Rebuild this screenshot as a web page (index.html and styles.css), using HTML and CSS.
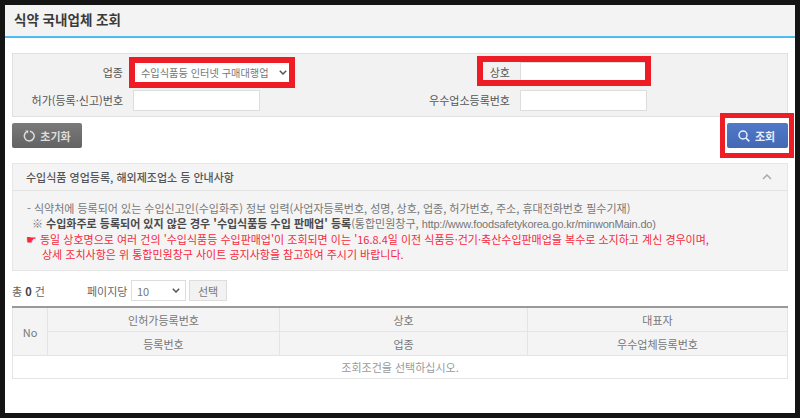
FILE: index.html
```html
<!DOCTYPE html>
<html lang="ko">
<head>
<meta charset="utf-8">
<title>식약 국내업체 조회</title>
<link rel="stylesheet" href="styles.css">
</head>
<body>
<div class="page">
  <h1 class="title">식약 국내업체 조회</h1>

  <div class="content">
    <form class="search">
      <div class="field">
        <label class="label">업종</label>
        <select class="ctl"><option>수입식품등 인터넷 구매대행업</option></select>
      </div>
      <div class="field">
        <label class="label">상호</label>
        <input class="ctl" type="text">
      </div>
      <div class="field">
        <label class="label">허가(등록·신고)번호</label>
        <input class="ctl" type="text">
      </div>
      <div class="field">
        <label class="label">우수업소등록번호</label>
        <input class="ctl" type="text">
      </div>
    </form>

    <div class="actions">
      <button class="btn btn_reset" type="button">
        <svg width="12" height="13" viewBox="0 0 12 13"><path d="M3.6 2.9A4.9 4.9 0 1 0 7 2.2" fill="none" stroke="#ddd" stroke-width="1.5"/><path d="M2.2 1.4l3.2 0.2-0.5 3z" fill="#ddd"/></svg>
        초기화
      </button>
      <button class="btn btn_search" type="button">
        <svg width="12" height="12" viewBox="0 0 12 12"><circle cx="5" cy="5" r="4" fill="none" stroke="#e8eefa" stroke-width="1.5"/><path d="M8 8L11.3 11.3" stroke="#e8eefa" stroke-width="1.7"/></svg>
        조회
      </button>
    </div>

    <div class="notice">
      <div class="notice_head">
        <span>수입식품 영업등록, 해외제조업소 등 안내사항</span>
        <svg width="10" height="6" viewBox="0 0 10 6"><path d="M1 5l4-4 4 4" fill="none" stroke="#aaa" stroke-width="1.5"/></svg>
      </div>
      <div class="notice_body">
        <p class="line1">- 식약처에 등록되어 있는 수입신고인(수입화주) 정보 입력(사업자등록번호, 성명, 상호, 업종, 허가번호, 주소, 휴대전화번호 필수기재)</p>
        <p class="line2">※ <b>수입화주로 등록되어 있지 않은 경우 '수입식품등 수입 판매업' 등록</b>(통합민원창구, <span class="url">http://www.foodsafetykorea.go.kr/minwonMain.do)</span></p>
        <p class="line3 warn"><span class="hand">☛</span>동일 상호명으로 여러 건의 '수입식품등 수입판매업'이 조회되면 이는 '16.8.4일 이전 식품등·건기·축산수입판매업을 복수로 소지하고 계신 경우이며,</p>
        <p class="line4 warn">상세 조치사항은 위 통합민원창구 사이트 공지사항을 참고하여 주시기 바랍니다.</p>
      </div>
    </div>

    <div class="list_top">
      <span class="total">총 <b>0</b> 건</span>
      <span class="per">페이지당</span>
      <select class="per_select"><option>10</option></select>
      <button class="btn_pick" type="button">선택</button>
    </div>

    <table class="grid">
      <colgroup>
        <col class="c_no"><col class="c_a"><col class="c_b"><col>
      </colgroup>
      <thead>
        <tr><th rowspan="2">No</th><th>인허가등록번호</th><th>상호</th><th>대표자</th></tr>
        <tr><th>등록번호</th><th>업종</th><th>우수업체등록번호</th></tr>
      </thead>
      <tbody>
        <tr><td colspan="4">조회조건을 선택하십시오.</td></tr>
      </tbody>
    </table>
  </div>

  <!-- red marks drawn over the screenshot -->
  <div class="mark mark1"></div>
  <div class="mark mark2"></div>
  <div class="mark mark3"></div>
</div>
</body>
</html>
```

FILE: styles.css
```css
html, body {
  margin: 0;
  padding: 0;
  height: 418px;
  overflow: hidden;
  background: #141414;
}

body {
  padding: 5px 5px 5px 5px;
  box-sizing: border-box;
  font-family: "Noto Sans CJK KR", "Liberation Sans", sans-serif;
  font-size: 11px;
  color: #666;
}

.page {
  position: relative;
  height: 408px;
  background: #fff;
}

.title {
  margin: 0;
  height: 31px;
  line-height: 29px;
  padding-left: 9px;
  font-size: 13.5px;
  font-weight: 700;
  color: #3a3a3a;
  background: #f3f3f3;
  border-bottom: 2px solid #4dbdf0;
}

.content {
  padding: 15px 7px 0 7px;
}

.search {
  display: grid;
  grid-template-columns: 1fr 1fr;
  grid-template-rows: 35px 29px;
  box-sizing: border-box;
  height: 64px;
  background: #f2f2f2;
  border: 1px solid #e0e0e0;
}

.field {
  display: flex;
  align-items: flex-end;
  padding-bottom: 6px;
}

.field:nth-child(n+3) {
  padding-bottom: 7px;
}

.label {
  width: 110px;
  text-align: right;
  line-height: 21px;
  font-size: 11px;
  color: #555;
}

.ctl {
  box-sizing: border-box;
  width: 127px;
  height: 21px;
  margin-left: 10px;
  background: #fff;
  border: 1px solid #ddd;
  padding: 0;
  font-family: inherit;
  font-size: 10.2px;
  color: #777;
}

select.ctl {
  width: 160px;
  height: 22px;
  padding-left: 7px;
}

select.ctl, .per_select {
  appearance: none;
  background-image: url("data:image/svg+xml,%3Csvg xmlns='http://www.w3.org/2000/svg' width='8' height='5'%3E%3Cpath d='M.8.8l3.2 3.2 3.2-3.2' fill='none' stroke='%23555' stroke-width='1.5'/%3E%3C/svg%3E");
  background-repeat: no-repeat;
  background-position: right 5px center;
}

.actions {
  display: flex;
  justify-content: space-between;
  margin-top: 6px;
}

.btn {
  display: flex;
  align-items: center;
  justify-content: center;
  gap: 5px;
  height: 25px;
  padding: 0;
  border: 0;
  border-radius: 2px;
  font-family: inherit;
  font-size: 11px;
  font-weight: 700;
}

.btn_reset {
  width: 70px;
  color: #ddd;
  background: linear-gradient(#7a7a7a, #636363);
}

.btn_search {
  width: 61px;
  padding-right: 2px;
  color: #e8eefa;
  background: linear-gradient(#5079c8, #4468b4);
}

.notice {
  margin-top: 15px;
  height: 108px;
  box-sizing: border-box;
  background: #f4f4f4;
  border: 1px solid #e6e6e6;
}

.notice_head {
  display: flex;
  justify-content: space-between;
  align-items: center;
  height: 26px;
  padding: 0 15px 0 13px;
  font-weight: 500;
  color: #555;
  border-bottom: 1px solid #e3e3e3;
}

.notice_body {
  padding-top: 10px;
}

.notice_body p {
  margin: 0;
  line-height: 15px;
  white-space: nowrap;
  font-size: 11px;
  color: #777;
}

.notice_body b {
  color: #4a4a4a;
  font-weight: 700;
}

.url {
  font-family: "Liberation Sans", sans-serif;
  letter-spacing: -0.2px;
}

.line1 { padding-left: 14px; }
.line2 { padding-left: 19px; }
.line3 { padding-left: 13px; }
.line4 { padding-left: 29px; }

.notice_body .warn {
  color: #f6293f;
}

.hand {
  display: inline-block;
  width: 14px;
  font-family: "DejaVu Sans", sans-serif;
  font-size: 12px;
  line-height: 14px;
}

.list_top {
  display: flex;
  align-items: center;
  height: 21px;
  margin-top: 9px;
}

.total {
  width: 75px;
}

.total b {
  color: #444;
}

.per {
  width: 44px;
}

.per_select {
  box-sizing: border-box;
  width: 55px;
  height: 21px;
  padding-left: 5px;
  background-color: #fff;
  border: 1px solid #ddd;
  font-family: inherit;
  font-size: 11px;
  color: #777;
}

.btn_pick {
  width: 38px;
  height: 21px;
  margin-left: 3px;
  padding: 0;
  background: #f2f2f2;
  border: 1px solid #ddd;
  font-family: inherit;
  font-size: 11px;
  color: #777;
}

.grid {
  width: 776px;
  margin-top: 5px;
  table-layout: fixed;
  border-collapse: collapse;
  border-top: 2px solid #999;
}

.c_no { width: 35px; }
.c_a { width: 232px; }
.c_b { width: 248px; }

.grid th, .grid td {
  padding: 0;
  text-align: center;
  font-weight: 400;
  border: 1px solid #e4e4e4;
  color: #777;
}

.grid th {
  height: 23px;
  background: #f4f4f4;
}

.grid td {
  height: 22px;
  color: #999;
}

.mark {
  position: absolute;
  box-sizing: border-box;
  border: 6px solid #ee1c25;
}

.mark1 {
  left: 124px;
  top: 52px;
  width: 166px;
  height: 31px;
}

.mark2 {
  left: 472px;
  top: 51px;
  width: 174px;
  height: 30px;
}

.mark3 {
  left: 715px;
  top: 108px;
  width: 74px;
  height: 45px;
  border-width: 5px;
}
```
